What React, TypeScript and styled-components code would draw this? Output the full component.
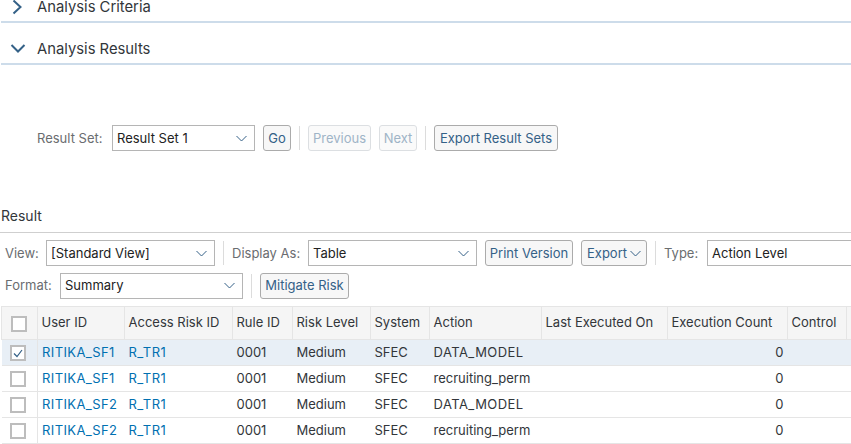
import React from 'react';
import styled, { createGlobalStyle } from 'styled-components';

const GlobalStyle = createGlobalStyle`
  html, body {
    margin: 0;
    padding: 0;
    height: 100%;
    overflow: hidden;
    background: #fff;
    font-family: Inter, "Noto Sans", "Liberation Sans", sans-serif;
    font-size: 13px;
    color: #32363a;
  }
`;

const Page = styled.div`
  width: 851px;
  height: 444px;
  overflow: hidden;
`;

const SectionHeader = styled.div<{ $height: number }>`
  height: ${props => props.$height}px;
  display: flex;
  align-items: flex-end;
  margin-left: 1px;
  border-bottom: 2px solid #cddcea;
  box-sizing: border-box;
`;

const SectionInner = styled.div`
  height: 28px;
  display: flex;
  align-items: center;
  flex: none;
`;

const SectionIcon = styled.svg`
  width: 36px;
  height: 16px;
  flex: none;
  fill: none;
  stroke: #346187;
  stroke-width: 2;
`;

const SectionTitle = styled.span`
  font-size: 14.8px;
  line-height: 16px;
  color: #32363a;
`;

const ResultSetBar = styled.div`
  display: flex;
  align-items: center;
  height: 26px;
  margin-top: 60px;
  padding-left: 37px;
`;

const Label = styled.span<{ $width: number }>`
  width: ${props => props.$width}px;
  flex: none;
  color: #6a6d70;
  font-size: 13px;
  white-space: nowrap;
`;

const Select = styled.div<{ $width: number }>`
  width: ${props => props.$width}px;
  height: 26px;
  flex: none;
  box-sizing: border-box;
  border: 1px solid #b5b5b5;
  background: #fff;
  display: flex;
  align-items: center;
  justify-content: space-between;
  padding: 0 7px 0 4px;
  color: #222;
  font-size: 13px;
`;

const Chevron = styled.svg`
  width: 11px;
  height: 7px;
  flex: none;
  fill: none;
  stroke: #346187;
  stroke-width: 1;
`;

const Button = styled.div<{ $width: number; $disabled?: boolean }>`
  width: ${props => props.$width}px;
  height: 26px;
  flex: none;
  box-sizing: border-box;
  border: 1px solid ${props => (props.$disabled ? '#dcdfe2' : '#ababab')};
  border-radius: 3px;
  background: ${props => (props.$disabled ? '#fafafa' : '#f7f7f7')};
  color: ${props => (props.$disabled ? '#9fb4c7' : '#346187')};
  display: flex;
  align-items: center;
  justify-content: center;
  gap: 3px;
  font-size: 13px;
  white-space: nowrap;
`;

const Separator = styled.div`
  width: 1px;
  height: 24px;
  flex: none;
  box-sizing: border-box;
  background: #dcdcdc;
  margin: 0 8px;
`;

const ResultTitle = styled.div`
  margin-top: 55px;
  height: 26px;
  padding-left: 1px;
  font-size: 14px;
  line-height: 20px;
  color: #32363a;
  border-bottom: 1px solid #cfcfcf;
`;

const ToolRow = styled.div`
  display: flex;
  align-items: center;
  height: 26px;
  margin-top: 7px;
  padding-left: 5px;
`;

const FormatRow = styled(ToolRow)`
  & > * {
    padding-bottom: 2px;
  }
`;

const Gap = styled.div<{ $width: number }>`
  width: ${props => props.$width}px;
  flex: none;
`;

const TypeInput = styled(Select)`
  padding-left: 4px;
  border-right: 0;
`;

const Table = styled.table`
  table-layout: fixed;
  border-collapse: collapse;
  margin: 7px 0 0 1px;
  width: 860px;
`;

const HeadCell = styled.th`
  height: 33px;
  box-sizing: border-box;
  padding: 0 4px 2px 3.5px;
  background: #f5f5f5;
  border: 1px solid #e5e5e5;
  font-weight: 400;
  font-size: 13px;
  text-align: left;
  color: #32363a;
  white-space: nowrap;
  overflow: hidden;
`;

const Row = styled.tr<{ $selected?: boolean }>`
  background: ${props => (props.$selected ? '#e8eff6' : '#fff')};
`;

const Cell = styled.td<{ $right?: boolean }>`
  height: 26px;
  box-sizing: border-box;
  padding: 0 4px 2px 4px;
  border-bottom: 1px solid #e5e5e5;
  font-size: 13px;
  color: #32363a;
  white-space: nowrap;
  overflow: hidden;
  text-align: ${props => (props.$right ? 'right' : 'left')};
`;

const SelectCell = styled(Cell)`
  padding: 0 2px 0 0;
  text-align: center;
  border-right: 1px solid #e5e5e5;
`;

const SelectHead = styled(HeadCell)`
  padding: 0 2px 0 0;
  text-align: center;
`;

const Check = styled.span`
  display: inline-flex;
  align-items: center;
  justify-content: center;
  width: 16px;
  height: 16px;
  box-sizing: border-box;
  border: 2px solid #bdbdbd;
  background: #fff;
  vertical-align: middle;
`;

const CheckMark = styled.svg`
  width: 10px;
  height: 9px;
  fill: none;
  stroke: #346187;
  stroke-width: 1.2;
`;

const LinkText = styled.span`
  color: #0070b1;
  letter-spacing: 0.4px;
`;

const CapsText = styled.span<{ $caps: boolean }>`
  letter-spacing: ${props => (props.$caps ? '0.45px' : '0')};
`;

const columns = [36, 87, 108, 60, 78, 59, 112, 126, 120, 59, 15];
const headers = ['User ID', 'Access Risk ID', 'Rule ID', 'Risk Level', 'System', 'Action', 'Last Executed On', 'Execution Count', 'Control', ''];
const rows = [
  { user: 'RITIKA_SF1', action: 'DATA_MODEL', selected: true },
  { user: 'RITIKA_SF1', action: 'recruiting_perm', selected: false },
  { user: 'RITIKA_SF2', action: 'DATA_MODEL', selected: false },
  { user: 'RITIKA_SF2', action: 'recruiting_perm', selected: false },
];

const Down = () => (
  <Chevron viewBox="0 0 11 7">
    <path d="M0.5 1 L5.5 6 L10.5 1" />
  </Chevron>
);

export default function App() {
  return (
    <Page>
      <GlobalStyle />
      <SectionHeader $height={23}>
        <SectionInner>
          <SectionIcon viewBox="0 0 36 16">
            <path d="M12.5 1.5 L19.5 8 L12.5 14.5" />
          </SectionIcon>
          <SectionTitle>Analysis Criteria</SectionTitle>
        </SectionInner>
      </SectionHeader>
      <SectionHeader $height={42}>
        <SectionInner>
          <SectionIcon viewBox="0 0 36 16">
            <path d="M10.5 4 L17 10.5 L23.5 4" />
          </SectionIcon>
          <SectionTitle>Analysis Results</SectionTitle>
        </SectionInner>
      </SectionHeader>

      <ResultSetBar>
        <Label $width={75}>Result Set:</Label>
        <Select $width={143}>
          Result Set 1
          <Down />
        </Select>
        <Gap $width={8} />
        <Button $width={28}>Go</Button>
        <Separator />
        <Button $width={63} $disabled>Previous</Button>
        <Gap $width={8} />
        <Button $width={38} $disabled>Next</Button>
        <Separator />
        <Button $width={124}>Export Result Sets</Button>
      </ResultSetBar>

      <ResultTitle>Result</ResultTitle>

      <ToolRow>
        <Label $width={41}>View:</Label>
        <Select $width={169}>
          [Standard View]
          <Down />
        </Select>
        <Separator />
        <Label $width={76}>Display As:</Label>
        <Select $width={169}>
          Table
          <Down />
        </Select>
        <Gap $width={8} />
        <Button $width={88}>Print Version</Button>
        <Gap $width={8} />
        <Button $width={66}>
          Export
          <Down />
        </Button>
        <Separator />
        <Label $width={43}>Type:</Label>
        <TypeInput $width={144}>Action Level</TypeInput>
      </ToolRow>
      <FormatRow>
        <Label $width={55}>Format:</Label>
        <Select $width={183}>
          Summary
          <Down />
        </Select>
        <Separator />
        <Button $width={89}>Mitigate Risk</Button>
      </FormatRow>

      <Table>
        <colgroup>
          {columns.map((width, index) => (
            <col key={index} style={{ width }} />
          ))}
        </colgroup>
        <thead>
          <tr>
            <SelectHead>
              <Check />
            </SelectHead>
            {headers.map((header, index) => (
              <HeadCell key={index}>{header}</HeadCell>
            ))}
          </tr>
        </thead>
        <tbody>
          {rows.map((row, index) => (
            <Row key={index} $selected={row.selected}>
              <SelectCell>
                <Check>
                  {row.selected && (
                    <CheckMark viewBox="0 0 10 9">
                      <path d="M1 4.5 L4 7.5 L9 1" />
                    </CheckMark>
                  )}
                </Check>
              </SelectCell>
              <Cell><LinkText>{row.user}</LinkText></Cell>
              <Cell><LinkText>R_TR1</LinkText></Cell>
              <Cell>0001</Cell>
              <Cell>Medium</Cell>
              <Cell>SFEC</Cell>
              <Cell><CapsText $caps={row.action === 'DATA_MODEL'}>{row.action}</CapsText></Cell>
              <Cell />
              <Cell $right>0</Cell>
              <Cell />
              <Cell />
            </Row>
          ))}
        </tbody>
      </Table>
    </Page>
  );
}
